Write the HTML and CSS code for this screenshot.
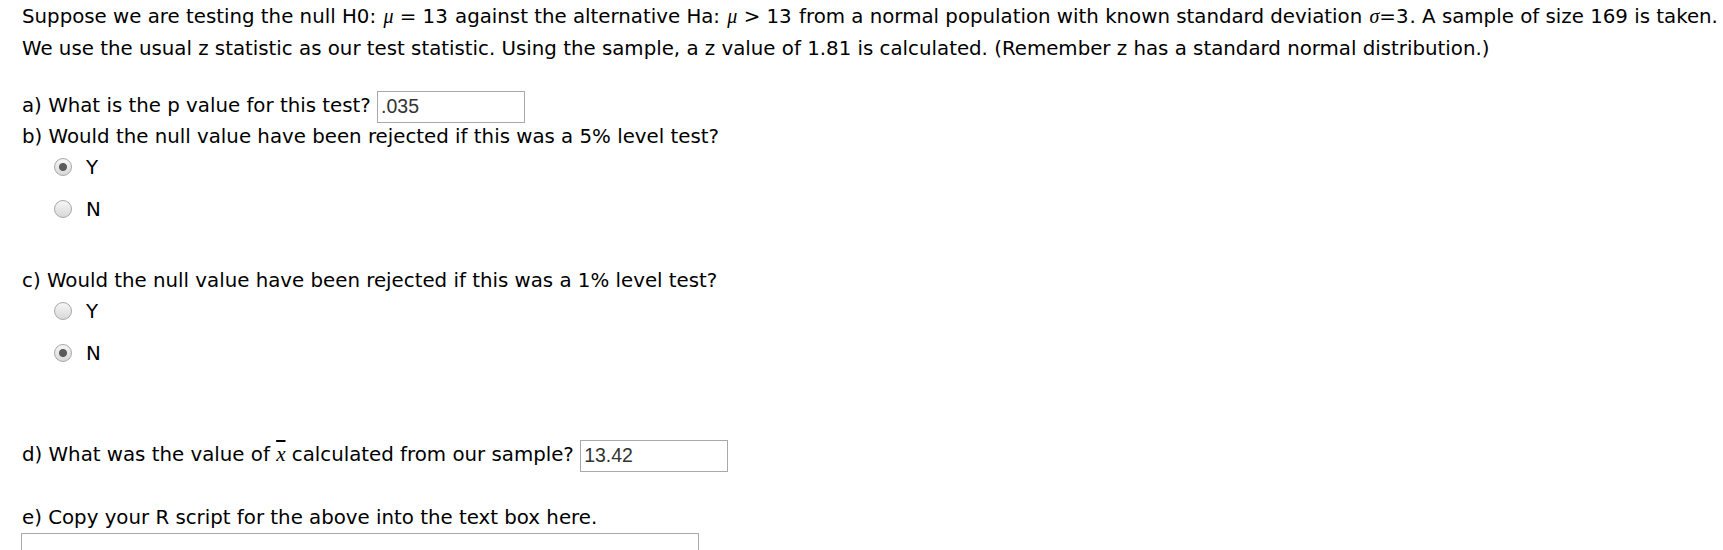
FILE: index.html
```html
<!DOCTYPE html>
<html>
<head>
    <meta charset="utf-8">
    <link rel="stylesheet" href="styles.css">
</head>
<body>
    <div class="problem">
        <p class="intro">Suppose we are testing the null H0: <span class="math"><i>μ</i> = 13</span> against the alternative Ha: <span class="math"><i>μ</i> &gt; 13</span> from a normal population with known standard deviation <span class="math"><i>σ</i>=3</span>. A sample of size 169 is taken.<br>We use the usual z statistic as our test statistic. Using the sample, a z value of 1.81 is calculated. (Remember z has a standard normal distribution.)</p>

        <div class="question q-input q-a">
            a) What is the p value for this test? <input type="text" class="answer-box" value=".035">
        </div>

        <div class="question">b) Would the null value have been rejected if this was a 5% level test?</div>
        <div class="choices">
            <label class="choice"><input type="radio" name="b" checked> Y</label>
            <label class="choice"><input type="radio" name="b"> N</label>
        </div>

        <div class="question">c) Would the null value have been rejected if this was a 1% level test?</div>
        <div class="choices">
            <label class="choice"><input type="radio" name="c"> Y</label>
            <label class="choice"><input type="radio" name="c" checked> N</label>
        </div>

        <div class="question q-input q-d">
            d) What was the value of <span class="xbar">x</span> calculated from our sample? <input type="text" class="answer-box" value="13.42">
        </div>

        <div class="question q-e">e) Copy your R script for the above into the text box here.</div>
        <textarea class="script-box"></textarea>
    </div>
</body>
</html>
```

FILE: styles.css
```css
body {
    margin: 0;
    font-family: "DejaVu Sans", Verdana, sans-serif;
    font-size: 19.8px;
    color: #000;
    background: #fff;
}

.problem {
    padding-left: 22px;
}

.intro {
    margin: 0;
    line-height: 32px;
    white-space: nowrap;
}

.math {
    margin: 0 1px;
}

.math i {
    font-family: "Liberation Serif", serif;
    font-style: italic;
    font-size: 20px;
}

.question {
    line-height: 30px;
}

.q-input {
    line-height: 32px;
    height: 32px;
}

.q-a {
    margin-top: 25px;
}

.q-d {
    margin-top: 70px;
}

.q-e {
    margin-top: 33px;
}

.xbar {
    font-family: "Liberation Serif", serif;
    font-style: italic;
    font-size: 21px;
    text-decoration: overline;
}

.answer-box {
    font-family: "Liberation Sans", Arial, sans-serif;
    font-size: 19.5px;
    width: 148px;
    height: 32px;
    box-sizing: border-box;
    border: 1px solid #a9a9a9;
    padding: 0 3px;
    color: #333;
    margin: 0;
    vertical-align: middle;
}

.choices {
    display: flex;
    flex-direction: column;
    gap: 12px;
    margin-bottom: 42px;
}

.choice {
    display: flex;
    align-items: center;
    height: 30px;
}

.choice input {
    -webkit-appearance: none;
    appearance: none;
    width: 18px;
    height: 18px;
    margin: 0 14px 0 32px;
    border-radius: 50%;
    border: 1px solid #a8a8a8;
    background: linear-gradient(#f6f6f6, #d8d8d8);
    box-sizing: border-box;
}

.choice input:checked {
    background: radial-gradient(circle, #5a5a5a 0, #5a5a5a 3.5px, transparent 4.5px), linear-gradient(#f6f6f6, #d8d8d8);
}

.script-box {
    display: block;
    width: 672px;
    height: 80px;
    margin: 0 0 0 -1px;
    border: 1px solid #a9a9a9;
    resize: none;
}
```
